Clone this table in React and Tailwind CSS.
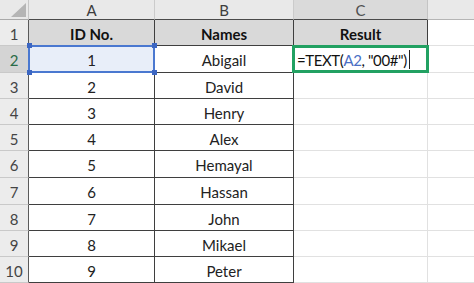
import React from "react";

const rows = [
  { n: 1, a: "ID No.", b: "Names" },
  { n: 2, a: "1", b: "Abigail" },
  { n: 3, a: "2", b: "David" },
  { n: 4, a: "3", b: "Henry" },
  { n: 5, a: "4", b: "Alex" },
  { n: 6, a: "5", b: "Hemayal" },
  { n: 7, a: "6", b: "Hassan" },
  { n: 8, a: "7", b: "John" },
  { n: 9, a: "8", b: "Mikael" },
  { n: 10, a: "9", b: "Peter" },
];

const font = { fontFamily: "Lato, 'Open Sans', sans-serif" };

function RowHeader({ n }) {
  const sel = n === 2;
  return (
    <div
      className={
        "flex items-center justify-center pt-[3px] border-r border-b border-r-[#5a5a5a] border-b-[#c9c9c9] text-[15px] " +
        (sel ? "bg-[#d4d4d4] text-[#2a6b47]" : "bg-[#ececec] text-[#444]")
      }
    >
      {n}
    </div>
  );
}

function DataCell({ children, header }) {
  return (
    <div
      className={
        "flex items-center justify-center pt-[3px] border-r border-b border-[#3f3f3f] text-[15px] " +
        (header ? "bg-[#d9d9d9] font-bold text-[#111]" : "bg-white text-[#222]")
      }
    >
      {children}
    </div>
  );
}

export default function App() {
  return (
    <div className="w-[474px] h-[283px] overflow-hidden bg-white" style={font}>
      <div className="grid grid-cols-[29px_126px_139px_134px_46px] grid-rows-[20px_26px_27px_26px_26px_26px_27px_27px_26px_26px_26px]">
        {/* column header row */}
        <div className="relative bg-[#e9e9e9] border-r border-b border-r-[#c6c6c6] border-b-[#a9a9a9]">
          <svg className="absolute left-0 top-0" width="29" height="20" viewBox="0 0 29 20">
            <polygon points="11,17 26,17 26,3" fill="#b5b5b5" />
          </svg>
        </div>
        <div className="flex items-center justify-center pt-[1px] bg-[#e9e9e9] border-r border-b border-r-[#cbcbcb] border-b-[#4a4a4a] text-[15px] text-[#3d3d3d]">
          A
        </div>
        <div className="flex items-center justify-center pt-[1px] bg-[#e9e9e9] border-r border-b border-r-[#cbcbcb] border-b-[#4a4a4a] text-[15px] text-[#3d3d3d]">
          B
        </div>
        <div className="flex items-center justify-center pt-[1px] bg-[#dadada] border-r border-b border-r-[#c4c4c4] border-b-[#4a4a4a] text-[15px] text-[#505050]">
          C
        </div>
        <div className="bg-[#e9e9e9] border-b border-b-[#b5b5b5]"></div>

        {rows.map((r) => (
          <React.Fragment key={r.n}>
            <RowHeader n={r.n} />
            {r.n === 2 ? (
              <div className="relative flex items-center justify-center pt-[3px] border-r border-b border-[#3f3f3f] bg-[#e8eef9] text-[15px] text-[#222]">
                {r.a}
                <div className="absolute -left-[1px] -top-[1px] -right-[1px] -bottom-[1px] border-2 border-[#4a78d0]" />
                <div className="absolute -left-[2px] -top-[3px] w-[5px] h-[5px] bg-[#3c66c2]" />
                <div className="absolute -right-[3px] -top-[3px] w-[5px] h-[5px] bg-[#3c66c2]" />
                <div className="absolute -left-[2px] -bottom-[3px] w-[5px] h-[5px] bg-[#3c66c2]" />
                <div className="absolute -right-[3px] -bottom-[3px] w-[5px] h-[5px] bg-[#3c66c2]" />
              </div>
            ) : (
              <DataCell header={r.n === 1}>{r.a}</DataCell>
            )}
            <DataCell header={r.n === 1}>{r.b}</DataCell>
            {r.n === 1 ? (
              <DataCell header>Result</DataCell>
            ) : r.n === 2 ? (
              <div className="relative flex items-center pl-[3px] pt-[3px] border-r border-b border-r-[#e0e0e0] border-b-[#e0e0e0] bg-white text-[15px] text-[#111] whitespace-pre tracking-[-0.4px]">
                <span>=TEXT(</span>
                <span className="text-[#4a6fc4]">A2</span>
                <span>, "00#")</span>
                <span className="ml-[2px] -mt-[3px] inline-block w-[1px] h-[19px] bg-[#222]" />
                <div className="absolute -left-[2px] -top-[1px] -right-[2px] -bottom-[1px] border-[3px] border-[#22a162]" />
              </div>
            ) : (
              <div className="border-r border-b border-[#e1e1e1] bg-white" />
            )}
            <div className="border-b border-[#e1e1e1] bg-white" />
          </React.Fragment>
        ))}
      </div>
    </div>
  );
}
